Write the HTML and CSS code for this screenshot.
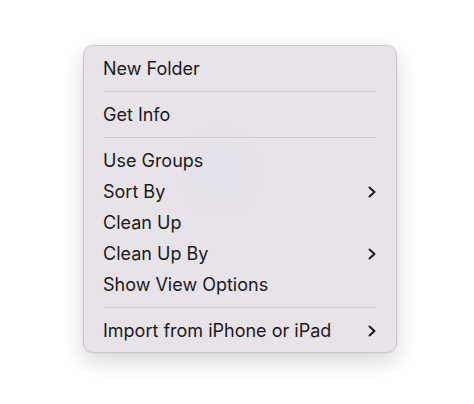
FILE: index.html
```html
<!DOCTYPE html>
<html>
<head>
<meta charset="utf-8">
<link rel="stylesheet" href="styles.css">
</head>
<body>
<div class="stage">
  <div class="menu">
    <div class="item"><span>New Folder</span></div>
    <div class="sep"></div>
    <div class="item"><span>Get Info</span></div>
    <div class="sep"></div>
    <div class="item"><span>Use Groups</span></div>
    <div class="item"><span>Sort By</span><svg class="chev" viewBox="0 0 8 12"><path d="M1.5 1.5 L6.5 6 L1.5 10.5"/></svg></div>
    <div class="item"><span>Clean Up</span></div>
    <div class="item"><span>Clean Up By</span><svg class="chev" viewBox="0 0 8 12"><path d="M1.5 1.5 L6.5 6 L1.5 10.5"/></svg></div>
    <div class="item"><span>Show View Options</span></div>
    <div class="sep"></div>
    <div class="item"><span>Import from iPhone or iPad</span><svg class="chev" viewBox="0 0 8 12"><path d="M1.5 1.5 L6.5 6 L1.5 10.5"/></svg></div>
  </div>
</div>
</body>
</html>
```
FILE: styles.css
```css
html, body {
  margin: 0;
  padding: 0;
  background: #ffffff;
}
.stage {
  width: 474px;
  height: 404px;
  padding: 45px 0 0 83px;
  box-sizing: border-box;
}
.menu {
  width: 314px;
  height: 308px;
  box-sizing: border-box;
  padding: 7px 20px 0 19px;
  border-radius: 10px;
  background: radial-gradient(ellipse 45px 50px at 135px 125px, #e2e2ec 0%, #e6e2ea 60%, rgba(232,227,234,0) 100%), #e8e3e9;
  border: 1px solid #cdc9ce;
  box-shadow: 0 8px 22px rgba(0,0,0,0.16), 0 0 3px rgba(0,0,0,0.06);
  font-family: Inter, "Liberation Sans", sans-serif;
  font-size: 18px;
  color: #1a191c;
}
.item {
  height: 31px;
  display: flex;
  align-items: center;
  justify-content: space-between;
}
.sep {
  height: 15px;
  display: flex;
  align-items: center;
  padding-left: 1px;
}
.sep::before {
  content: "";
  flex: 1;
  height: 1px;
  background: #cdc8ce;
}
.chev {
  width: 8px;
  height: 12px;
}
.chev path {
  fill: none;
  stroke: #1a191c;
  stroke-width: 2;
  stroke-linecap: round;
  stroke-linejoin: round;
}
```
